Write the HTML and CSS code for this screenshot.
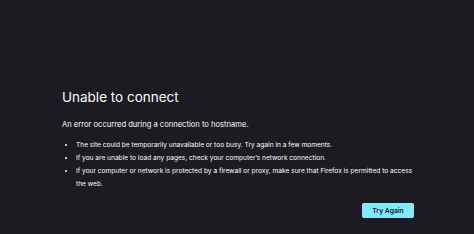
FILE: index.html
```html
<!DOCTYPE html>
<html>
<head>
<meta charset="utf-8">
<link rel="stylesheet" href="styles.css">
</head>
<body>
<main class="page">
  <h1 class="title">Unable to connect</h1>
  <p class="intro">An error occurred during a connection to hostname.</p>
  <ul class="reasons">
    <li>The site could be temporarily unavailable or too busy. Try again in a few moments.</li>
    <li>If you are unable to load any pages, check your computer’s network connection.</li>
    <li>If your computer or network is protected by a firewall or proxy, make sure that Firefox is permitted to access the web.</li>
  </ul>
  <div class="actions">
    <button class="retry">Try Again</button>
  </div>
</main>
</body>
</html>
```
FILE: styles.css
```css
html, body {
  margin: 0;
  padding: 0;
  background: #1c1b22;
  height: 100%;
}
body {
  font-family: Inter, "Noto Sans", "Liberation Sans", sans-serif;
  color: #fbfbfe;
}
.page {
  padding: 87px 0 0 62px;
  width: 352px;
}
.title {
  margin: 0;
  font-size: 13.5px;
  font-weight: 400;
  line-height: 20px;
}
.intro {
  margin: 12px 0 0;
  font-size: 7.6px;
  line-height: 12px;
}
.reasons {
  margin: 8px 0 0;
  padding-left: 14px;
  font-size: 6.6px;
  line-height: 13px;
}
.reasons li {
  margin: 0;
}
.actions {
  display: flex;
  justify-content: flex-end;
  margin-top: 12px;
}
.retry {
  background: #80ebff;
  color: #15141a;
  border: none;
  border-radius: 2px;
  font-family: Inter, "Noto Sans", sans-serif;
  font-weight: 600;
  font-size: 6.8px;
  width: 52px;
  height: 15px;
  padding: 0;
}
```
